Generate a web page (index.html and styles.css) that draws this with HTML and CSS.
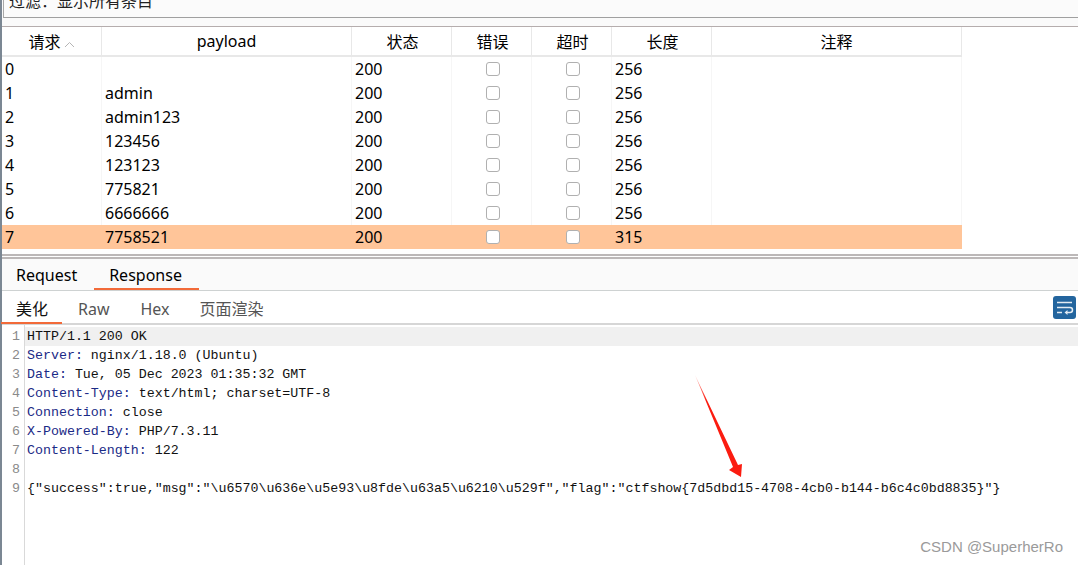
FILE: index.html
```html
<!DOCTYPE html>
<html lang="zh">
<head>
<meta charset="utf-8">
<title>Intruder</title>
<link rel="stylesheet" href="styles.css">
</head>
<body>
<div class="page">
  <div class="filter-bar"><div class="filter-box">过滤：显示所有条目</div></div>
  <div class="table-wrap">
    <table class="results">
      <colgroup>
        <col class="c-req"><col class="c-pay"><col class="c-status"><col class="c-flag"><col class="c-flag"><col class="c-len"><col class="c-note">
      </colgroup>
      <thead>
        <tr>
          <th>请求<svg class="sort" width="11" height="7" viewBox="0 0 11 7"><path d="M1 6 5.500 1.500 10 6" fill="none" stroke="#b5b5b5" stroke-width="1"/></svg></th>
          <th>payload</th><th class="nudge">状态</th><th class="nudge">错误</th><th class="nudge">超时</th><th class="nudge">长度</th><th>注释</th>
        </tr>
      </thead>
      <tbody>
        <tr><td>0</td><td></td><td>200</td><td class="chk"><i></i></td><td class="chk"><i></i></td><td>256</td><td></td></tr>
        <tr><td>1</td><td>admin</td><td>200</td><td class="chk"><i></i></td><td class="chk"><i></i></td><td>256</td><td></td></tr>
        <tr><td>2</td><td>admin123</td><td>200</td><td class="chk"><i></i></td><td class="chk"><i></i></td><td>256</td><td></td></tr>
        <tr><td>3</td><td>123456</td><td>200</td><td class="chk"><i></i></td><td class="chk"><i></i></td><td>256</td><td></td></tr>
        <tr><td>4</td><td>123123</td><td>200</td><td class="chk"><i></i></td><td class="chk"><i></i></td><td>256</td><td></td></tr>
        <tr><td>5</td><td>775821</td><td>200</td><td class="chk"><i></i></td><td class="chk"><i></i></td><td>256</td><td></td></tr>
        <tr><td>6</td><td>6666666</td><td>200</td><td class="chk"><i></i></td><td class="chk"><i></i></td><td>256</td><td></td></tr>
        <tr class="selected"><td>7</td><td>7758521</td><td>200</td><td class="chk"><i></i></td><td class="chk"><i></i></td><td>315</td><td></td></tr>
      </tbody>
    </table>
  </div>
  <div class="tabs">
    <span class="tab">Request</span>
    <span class="tab active">Response</span>
  </div>
  <div class="subtabs">
    <span class="subtab active">美化</span>
    <span class="subtab">Raw</span>
    <span class="subtab">Hex</span>
    <span class="subtab">页面渲染</span>
    <svg class="wrap-icon" width="23" height="23" viewBox="0 0 23 23">
      <rect width="23" height="23" rx="3" fill="#23659e"/>
      <path d="M4 6.500h15M4 11.500h13a2.500 2.500 0 0 1 0 5h-4M4 16.500h5" fill="none" stroke="#e4ecf3" stroke-width="1.500"/>
      <path d="M14.500 14v5l-3-2.500z" fill="#e4ecf3"/>
    </svg>
  </div>
  <div class="code">
    <div class="line current"><span class="num">1</span><span class="src">HTTP/1.1 200 OK</span></div>
    <div class="line"><span class="num">2</span><span class="src"><b>Server:</b> nginx/1.18.0 (Ubuntu)</span></div>
    <div class="line"><span class="num">3</span><span class="src"><b>Date:</b> Tue, 05 Dec 2023 01:35:32 GMT</span></div>
    <div class="line"><span class="num">4</span><span class="src"><b>Content-Type:</b> text/html; charset=UTF-8</span></div>
    <div class="line"><span class="num">5</span><span class="src"><b>Connection:</b> close</span></div>
    <div class="line"><span class="num">6</span><span class="src"><b>X-Powered-By:</b> PHP/7.3.11</span></div>
    <div class="line"><span class="num">7</span><span class="src"><b>Content-Length:</b> 122</span></div>
    <div class="line"><span class="num">8</span><span class="src"></span></div>
    <div class="line"><span class="num">9</span><span class="src">{"success":true,"msg":"\u6570\u636e\u5e93\u8fde\u63a5\u6210\u529f","flag":"ctfshow{7d5dbd15-4708-4cb0-b144-b6c4c0bd8835}"}</span></div>
  </div>
  <svg class="arrow" width="60" height="110" viewBox="690 372 60 110">
    <defs>
      <linearGradient id="fade" x1="695" y1="375" x2="741" y2="477" gradientUnits="userSpaceOnUse">
        <stop offset="0" stop-color="#ff2a1a" stop-opacity="0.3"/>
        <stop offset="0.25" stop-color="#fb1c10"/>
        <stop offset="1" stop-color="#fb1c10"/>
      </linearGradient>
    </defs>
    <polygon points="695,375 738,465 742,464 741,477 729,470 733,467" fill="url(#fade)"/>
  </svg>
  <div class="watermark">CSDN @SuperherRo</div>
</div>
</body>
</html>
```
FILE: styles.css
```css
* { box-sizing: border-box; }
html, body { margin: 0; padding: 0; }
body {
  width: 1078px;
  height: 565px;
  overflow: hidden;
  background: #fff;
  font-family: "Noto Sans", "Noto Sans CJK SC", sans-serif;
  font-size: 16px;
  color: #000;
}
.page {
  position: relative;
  display: flex;
  flex-direction: column;
  height: 565px;
  border-left: 2px solid #7b8793;
}
.filter-bar {
  height: 26px;
  flex: none;
  padding: 0 0 8px 1px;
  background: #fafafa;
  display: flex;
  align-items: flex-end;
  overflow: hidden;
}
.filter-box {
  flex: 1;
  height: 24px;
  padding: 0 0 6px 5px;
  border-left: 1px solid #a8a8a8;
  border-bottom: 1px solid #a0a0a0;
  background: #fbfbfb;
  display: flex;
  align-items: flex-end;
  line-height: 20px;
  color: #222;
}
.table-wrap {
  height: 230px;
  flex: none;
  border-top: 1px solid #b5adad;
  border-bottom: 2px solid #bcb8b8;
}
.results {
  width: 960px;
  border-collapse: separate;
  border-spacing: 0;
  table-layout: fixed;
}
.c-req { width: 100px; }
.c-pay { width: 250px; }
.c-status { width: 100px; }
.c-flag { width: 80px; }
.c-len { width: 100px; }
.c-note { width: 250px; }
.results th {
  height: 30px;
  padding: 0;
  font-weight: 400;
  text-align: center;
  background: #fff;
  border-right: 1px solid #e8e8e8;
  border-bottom: 2px solid #e8e8e8;
}
.results .nudge { padding-left: 2px; }
.sort { margin-left: 3px; vertical-align: 0; }
.results td {
  height: 24px;
  padding: 0 0 0 3px;
  line-height: 24px;
  border-right: 1px solid #f6f6f6;
  white-space: nowrap;
}
.results .chk { padding: 0; text-align: center; }
.chk i {
  display: inline-block;
  width: 14px;
  height: 14px;
  margin: 5px 0 0 2px;
  border: 1px solid #b0b0b0;
  border-radius: 3px;
  background: #fff;
  vertical-align: top;
}
.selected td { background: #ffc599; border-right-color: #ffc599; }
.tabs {
  height: 34px;
  flex: none;
  margin-top: 1px;
  display: flex;
  background: #fafafa;
  border-top: 2px solid #bcb8b8;
  border-bottom: 1px solid #ced2d2;
}
.tab {
  padding: 0 16px 0 14px;
  height: 31px;
  line-height: 33px;
}
.tab.active { border-bottom: 2px solid #f26a39; padding: 0 0 0 15px; width: 105px; margin-left: 1px; }
.subtabs {
  height: 34px;
  flex: none;
  display: flex;
  position: relative;
  align-items: stretch;
  background: #fff;
  border-bottom: 2px solid #d6d6d6;
}
.subtab {
  padding: 0 16px 0 14px;
  line-height: 36px;
  color: #555;
  white-space: nowrap;
}
.subtab.active { color: #111; border-bottom: 2px solid #f26a39; height: 33px; margin-left: -1px; padding-left: 15px; width: 61px; }
.subtab:nth-child(2) { margin-left: 2px; }
.subtab:nth-child(3) { margin-left: 1px; }
.wrap-icon { position: absolute; right: 2px; top: 5px; }
.code {
  position: relative;
  flex: 1;
  display: flex;
  flex-direction: column;
  padding-top: 2px;
  font-family: "Liberation Mono", "DejaVu Sans Mono", monospace;
  font-size: 13.3px;
  color: #111;
}
.code::before {
  content: "";
  position: absolute;
  left: 22px;
  top: 0;
  bottom: 0;
  width: 1px;
  background: #d9d9d9;
}
.line {
  display: flex;
  height: 19px;
  line-height: 19px;
  white-space: pre;
}
.line.current { background: #f0f0f0; }
.num {
  width: 23px;
  flex: none;
  padding-right: 5px;
  text-align: right;
  color: #8a8a8a;
  background: #fff;
}
.src { padding-left: 2px; }
.src b { font-weight: 400; color: #1a2a86; }
.arrow { position: absolute; left: 688px; top: 372px; }
.watermark {
  position: absolute;
  right: 15px;
  bottom: 10px;
  font-family: "Liberation Sans", sans-serif;
  font-size: 15px;
  color: #9a9a9a;
}
```
